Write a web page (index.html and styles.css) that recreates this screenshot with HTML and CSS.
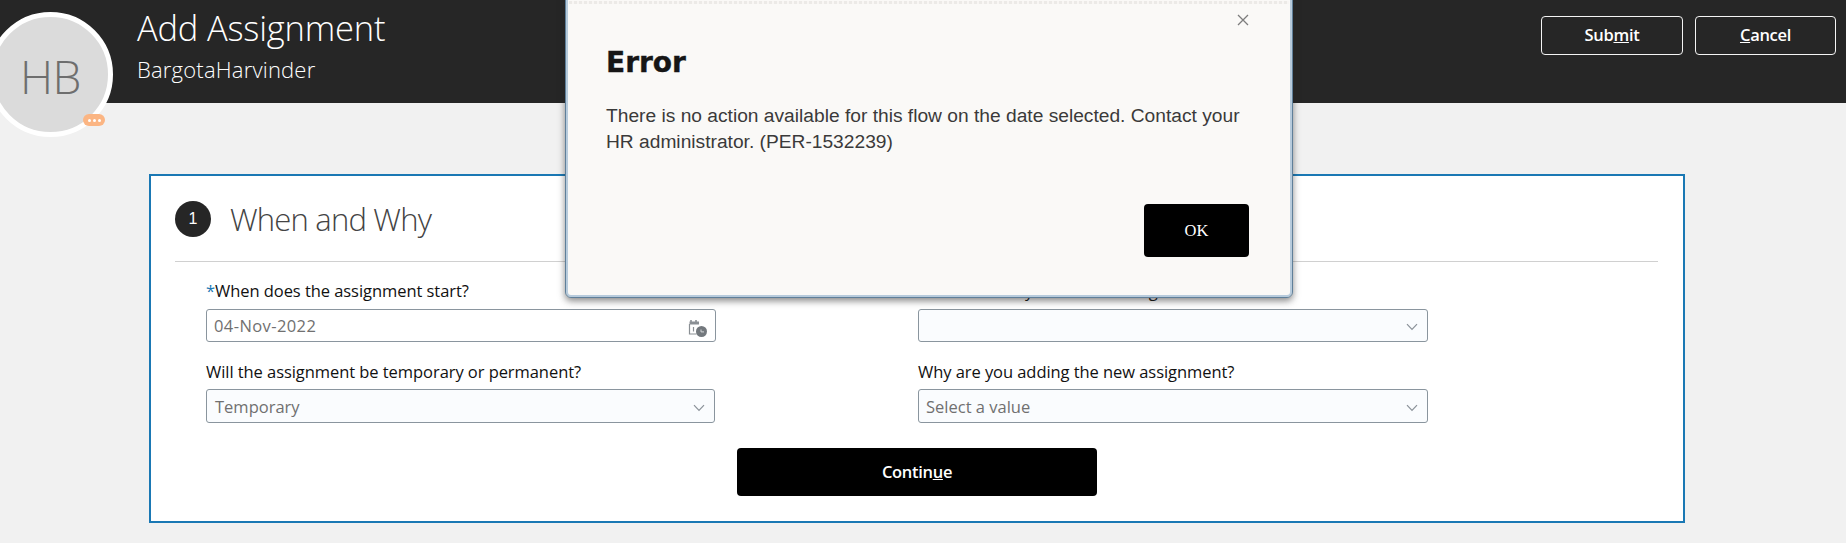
FILE: index.html
```html
<!DOCTYPE html>
<html lang="en">
<head>
<meta charset="utf-8">
<title>Add Assignment</title>
<link rel="stylesheet" href="styles.css">
</head>
<body>
<div class="page">
  <header class="topbar">
    <div class="titles">
      <h1 class="page-title">Add Assignment</h1>
      <div class="page-sub">BargotaHarvinder</div>
    </div>
    <div class="actions">
      <button class="btn-outline submit">Sub<u>m</u>it</button>
      <button class="btn-outline cancel"><u>C</u>ancel</button>
    </div>
  </header>

  <div class="avatar">HB</div>
  <div class="avatar-badge"><i></i><i></i><i></i></div>

  <main class="content">
    <section class="card">
      <div class="step-head">
        <span class="step-num">1</span>
        <h2 class="step-title">When and Why</h2>
      </div>
      <div class="form-grid">
        <div class="field">
          <label class="label"><span class="req">*</span>When does the assignment start?</label>
          <div class="input date">
            <span class="value">04-Nov-2022</span>
            <svg class="cal" width="20" height="20" viewBox="0 0 20 20">
              <path d="M3 2v3M8 2v3" stroke="#8a8f94" stroke-width="1.6" fill="none"/>
              <path d="M1.5 3.5h9.5v3H1.5z" fill="#8a8f94"/>
              <path d="M1.5 6v10h7" stroke="#8a8f94" stroke-width="1.2" fill="none"/>
              <path d="M5.5 9v4.5" stroke="#8a8f94" stroke-width="1.2"/>
              <circle cx="13.5" cy="13.5" r="5.5" fill="#73787d"/>
              <path d="M13 11.5v2.4h3" stroke="#d5d7d9" stroke-width="1" fill="none"/>
            </svg>
          </div>
        </div>
        <div class="field">
          <label class="label">What's the way to add the assignment?</label>
          <div class="input select">
            <span class="value"></span>
            <svg class="chev" width="12" height="8" viewBox="0 0 12 8"><path d="M1 1.2l5 5.3 5-5.3" fill="none" stroke="#8b9299" stroke-width="1.2"/></svg>
          </div>
        </div>
        <div class="field">
          <label class="label">Will the assignment be temporary or permanent?</label>
          <div class="input select tall narrow">
            <span class="value">Temporary</span>
            <svg class="chev" width="12" height="8" viewBox="0 0 12 8"><path d="M1 1.2l5 5.3 5-5.3" fill="none" stroke="#8b9299" stroke-width="1.2"/></svg>
          </div>
        </div>
        <div class="field">
          <label class="label">Why are you adding the new assignment?</label>
          <div class="input select tall">
            <span class="value">Select a value</span>
            <svg class="chev" width="12" height="8" viewBox="0 0 12 8"><path d="M1 1.2l5 5.3 5-5.3" fill="none" stroke="#8b9299" stroke-width="1.2"/></svg>
          </div>
        </div>
      </div>
      <div class="continue-row">
        <button class="btn-continue">Contin<u>u</u>e</button>
      </div>
    </section>
  </main>

  <div class="dialog" role="dialog">
    <div class="dialog-close">
      <svg width="12" height="12" viewBox="0 0 12 12"><path d="M1 1l10 10M11 1L1 11" stroke="#7d7d7d" stroke-width="1.3" fill="none"/></svg>
    </div>
    <h3 class="dialog-title">Error</h3>
    <p class="dialog-text">There is no action available for this flow on the date selected. Contact your HR administrator. (PER-1532239)</p>
    <div class="dialog-actions">
      <button class="btn-ok">OK</button>
    </div>
  </div>
</div>
</body>
</html>
```

FILE: styles.css
```css
* { box-sizing: border-box; }
html, body { margin: 0; padding: 0; }
body { background: #f1f1f1; font-family: "Open Sans", "Liberation Sans", sans-serif; }
.page { position: relative; width: 1846px; height: 543px; overflow: hidden; background: #f1f1f1; }

.topbar {
  height: 103px;
  background: #262626;
  display: flex;
  justify-content: space-between;
  padding: 0 10px 0 137px;
}
.titles { color: #fff; }
.page-title {
  margin: 7px 0 0;
  font-size: 34.5px;
  line-height: 42px;
  font-weight: 300;
  letter-spacing: -0.2px;
}
.page-sub {
  margin-top: 6px;
  font-size: 22px;
  line-height: 28px;
  font-weight: 300;
  letter-spacing: 0.2px;
}
.actions { display: flex; gap: 12px; padding-top: 16px; }
.btn-outline {
  height: 39px;
  padding: 0 0 3px;
  background: transparent;
  color: #fff;
  border: 1px solid #f4f4f4;
  border-radius: 4px;
  font: 600 16.5px "Open Sans", sans-serif;
  letter-spacing: -0.3px;
}
.submit { width: 142px; }
.cancel { width: 141px; }

.avatar {
  position: absolute;
  left: -12px;
  top: 12px;
  width: 125px;
  height: 125px;
  border-radius: 50%;
  background: #dbdbdb;
  border: 5px solid #fff;
  display: flex;
  align-items: center;
  justify-content: center;
  color: #6e6e6e;
  font-size: 46px;
  font-weight: 300;
  padding-top: 2px;
  letter-spacing: -0.5px;
}
.avatar-badge {
  position: absolute;
  left: 83px;
  top: 114px;
  width: 22px;
  height: 12px;
  border-radius: 6px;
  background: #fbb583;
  display: flex;
  align-items: center;
  justify-content: center;
  gap: 2px;
}
.avatar-badge i { width: 3px; height: 3px; border-radius: 50%; background: #fff; }

.content { padding: 71px 0 0 149px; }
.card {
  width: 1536px;
  height: 349px;
  background: #fff;
  border: 2px solid #1a78b4;
  padding: 25px 25px 0 24px;
}
.step-head {
  display: flex;
  align-items: center;
  gap: 19px;
  height: 61px;
  padding-bottom: 25px;
  border-bottom: 1px solid #d0d0d0;
}
.step-num {
  width: 36px;
  height: 36px;
  border-radius: 50%;
  background: #262626;
  color: #fff;
  display: flex;
  align-items: center;
  justify-content: center;
  font: 16px "Liberation Sans", sans-serif;
}
.step-title {
  margin: 0;
  font-size: 31px;
  line-height: 36px;
  font-weight: 300;
  color: #444;
  letter-spacing: -0.8px;
}

.form-grid {
  display: grid;
  grid-template-columns: 510px 510px;
  column-gap: 202px;
  row-gap: 18px;
  padding: 17px 0 0 31px;
}
.label {
  display: block;
  height: 30px;
  font-size: 16.5px;
  line-height: 24px;
  font-weight: 400;
  color: #111;
  letter-spacing: -0.06px;
}
.req { color: #1a78b4; }
.input {
  height: 33px;
  border: 1px solid #8a959e;
  border-radius: 3px;
  display: flex;
  align-items: center;
  justify-content: space-between;
  padding: 0 7px;
  background: #fff;
  color: #707070;
  font-size: 16.5px;
}
.date .value { letter-spacing: 0.4px; }
.select { background: #fafcfe; padding-right: 9px; }
.tall { height: 34px; margin-top: -1px; }
.narrow { width: 509px; padding-left: 8px; padding-right: 9px; }
.cal { margin-right: 0; margin-top: 4px; }
.chev { margin-top: 3px; }

.continue-row { display: flex; padding: 25px 0 0 562px; }
.btn-continue {
  width: 360px;
  height: 48px;
  padding: 0 0 2px;
  background: #000;
  color: #fff;
  border: 0;
  border-radius: 4px;
  font: 600 16.5px "Open Sans", sans-serif;
  letter-spacing: -0.3px;
}

.dialog {
  position: absolute;
  left: 565px;
  top: -6px;
  width: 728px;
  height: 304px;
  background: #faf9f7;
  border: 1px solid #5f7f99;
  border-radius: 0 0 6px 6px;
  box-shadow: inset 0 0 0 2px #b7cbdc, 0 3px 7px rgba(40, 40, 40, 0.55);
  padding: 0 37px 0 40px;
  display: flex;
  flex-direction: column;
}
.dialog::before {
  content: "";
  position: absolute;
  left: 3px;
  right: 3px;
  top: 6px;
  height: 3px;
  background: repeating-linear-gradient(90deg, #eceae7 0 3px, #f8f6f4 3px 5px);
}
.dialog-close { display: flex; justify-content: flex-end; padding: 19px 0 0; height: 37px; margin-right: 6px; }
.dialog-title {
  margin: 13px 0 0;
  font: 700 28px/36px "DejaVu Sans", sans-serif;
  color: #161616;
  -webkit-text-stroke: 0.4px #161616;
}
.dialog-text {
  margin: 22px 0 0;
  font: 19.2px/26px "Liberation Sans", Arial, sans-serif;
  color: #3a3a3a;
}
.dialog-actions { display: flex; justify-content: flex-end; margin-top: 49px; margin-right: 6px; }
.btn-ok {
  width: 105px;
  height: 53px;
  background: #000;
  color: #fff;
  border: 0;
  border-radius: 4px;
  font: 16.5px "Liberation Serif", serif;
}
```
